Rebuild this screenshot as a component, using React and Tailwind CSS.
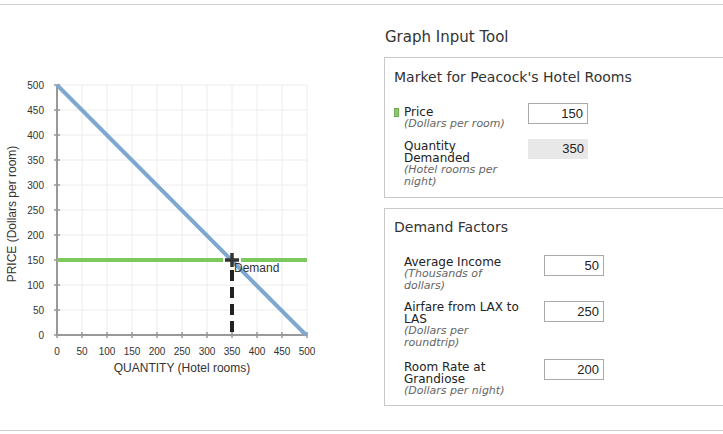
import React from "react";

const steps = [0, 50, 100, 150, 200, 250, 300, 350, 400, 450, 500];
const px = (q) => 57 + q / 2;
const py = (p) => 335 - p / 2;

function Chart() {
  return (
    <svg width="370" height="425" viewBox="0 5 370 425" className="shrink-0">
      {/* grid */}
      {steps.slice(1).map((s) => (
        <g key={s}>
          <line x1={px(s)} y1={85} x2={px(s)} y2={335} stroke="#ececec" strokeWidth="1" />
          <line x1={57} y1={py(s)} x2={307} y2={py(s)} stroke="#ececec" strokeWidth="1" />
        </g>
      ))}
      {/* axes */}
      <line x1={57} y1={85} x2={57} y2={336} stroke="#999" strokeWidth="2" />
      <line x1={56} y1={335} x2={307} y2={335} stroke="#999" strokeWidth="2" />
      {steps.map((s) => (
        <g key={s}>
          <line x1={px(s)} y1={332} x2={px(s)} y2={338} stroke="#999" strokeWidth="1.5" />
          <line x1={54} y1={py(s)} x2={60} y2={py(s)} stroke="#999" strokeWidth="1.5" />
        </g>
      ))}
      <g style={{ fontFamily: '"Liberation Sans", Arial, sans-serif' }} fontSize="10" fill="#333">
        {steps.map((s) => (
          <text key={s} x={44} y={py(s) + 3.5} textAnchor="end">
            {s}
          </text>
        ))}
        {steps.map((s) => (
          <text key={s} x={px(s)} y={355} textAnchor="middle">
            {s}
          </text>
        ))}
      </g>
      <g style={{ fontFamily: '"Liberation Sans", Arial, sans-serif' }} fontSize="12" fill="#333">
        <text x={182} y={372} textAnchor="middle">QUANTITY (Hotel rooms)</text>
        <text x={16} y={214} textAnchor="middle" transform="rotate(-90 16 214)">
          PRICE (Dollars per room)
        </text>
      </g>
      {/* demand curve */}
      <line x1={57} y1={85} x2={306} y2={335} stroke="#7fa8d0" strokeWidth="4" />
      {/* price line */}
      <line x1={57} y1={260} x2={223} y2={260} stroke="#7ec95c" strokeWidth="4" />
      <line x1={241} y1={260} x2={307} y2={260} stroke="#7ec95c" strokeWidth="4" />
      {/* quantity drop line */}
      <line x1={232} y1={270} x2={232} y2={335} stroke="#222" strokeWidth="4" strokeDasharray="11 6" />
      {/* point marker */}
      <line x1={225} y1={260} x2={239} y2={260} stroke="#333" strokeWidth="3.5" />
      <line x1={232} y1={253} x2={232} y2={267} stroke="#333" strokeWidth="3.5" />
      <text x={234} y={272} fontSize="12" fill="#333" style={{ fontFamily: '"Liberation Sans", Arial, sans-serif' }}>
        Demand
      </text>
    </svg>
  );
}

function NumBox({ value, gray, className }) {
  return (
    <div
      className={
        "w-[60px] shrink-0 text-right pr-[4px] text-[13px] text-[#222] font-['Liberation_Sans',Arial,sans-serif] " +
        (gray ? "h-[20px] leading-[20px] bg-[#e8e8e8] " : "h-[21px] leading-[19px] border border-[#aaa] bg-white ") +
        className
      }
    >
      {value}
    </div>
  );
}

function Label({ title, sub, width }) {
  return (
    <div className={width + " shrink-0"}>
      <div className="text-[12px] leading-[12px] text-[#222]">{title}</div>
      <div className="text-[11px] leading-[12px] italic text-[#666]">{sub}</div>
    </div>
  );
}

export default function App() {
  return (
    <div className="w-[723px] h-[434px] overflow-hidden bg-white font-['DejaVu_Sans',Verdana,sans-serif]">
      <div className="mt-[4px] h-[427px] border-t border-b border-[#cfcfcf] flex">
        <Chart />
        <div className="ml-[14px] pt-[25px]">
          <div className="text-[15px] leading-[15px] text-[#333] pl-[1px]">Graph Input Tool</div>

          <div className="mt-[12px] w-[360px] border border-[#c8c8c8] pl-[9px] pt-[12px] pb-[9px]">
            <div className="text-[14px] leading-[14px] text-[#333]">Market for Peacock's Hotel Rooms</div>
            <div className="mt-[22px] flex items-start">
              <div className="w-[10px] shrink-0 pt-[2px]">
                <div className="w-[5px] h-[9px] bg-[#8cc96e] border border-[#6fae52]" />
              </div>
              <Label title="Price" sub="(Dollars per room)" width="w-[104px]" />
              <NumBox value="150" className="ml-[20px] -mt-[3px]" />
            </div>
            <div className="mt-[10px] flex items-start">
              <div className="w-[10px] shrink-0" />
              <Label title="Quantity Demanded" sub="(Hotel rooms per night)" width="w-[104px]" />
              <NumBox value="350" gray className="ml-[20px] -mt-[1px]" />
            </div>
          </div>

          <div className="mt-[10px] w-[360px] border border-[#c8c8c8] pl-[9px] pt-[11px] pb-[8px]">
            <div className="text-[14px] leading-[14px] text-[#333]">Demand Factors</div>
            <div className="mt-[22px] flex items-start pl-[10px]">
              <Label title="Average Income" sub="(Thousands of dollars)" width="w-[120px]" />
              <NumBox value="50" className="ml-[20px] -mt-[1px]" />
            </div>
            <div className="mt-[9px] flex items-start pl-[10px]">
              <Label title="Airfare from LAX to LAS" sub="(Dollars per roundtrip)" width="w-[120px]" />
              <NumBox value="250" className="ml-[20px]" />
            </div>
            <div className="mt-[12px] flex items-start pl-[10px]">
              <Label title="Room Rate at Grandiose" sub="(Dollars per night)" width="w-[120px]" />
              <NumBox value="200" className="ml-[20px] -mt-[2px]" />
            </div>
          </div>
        </div>
      </div>
    </div>
  );
}
